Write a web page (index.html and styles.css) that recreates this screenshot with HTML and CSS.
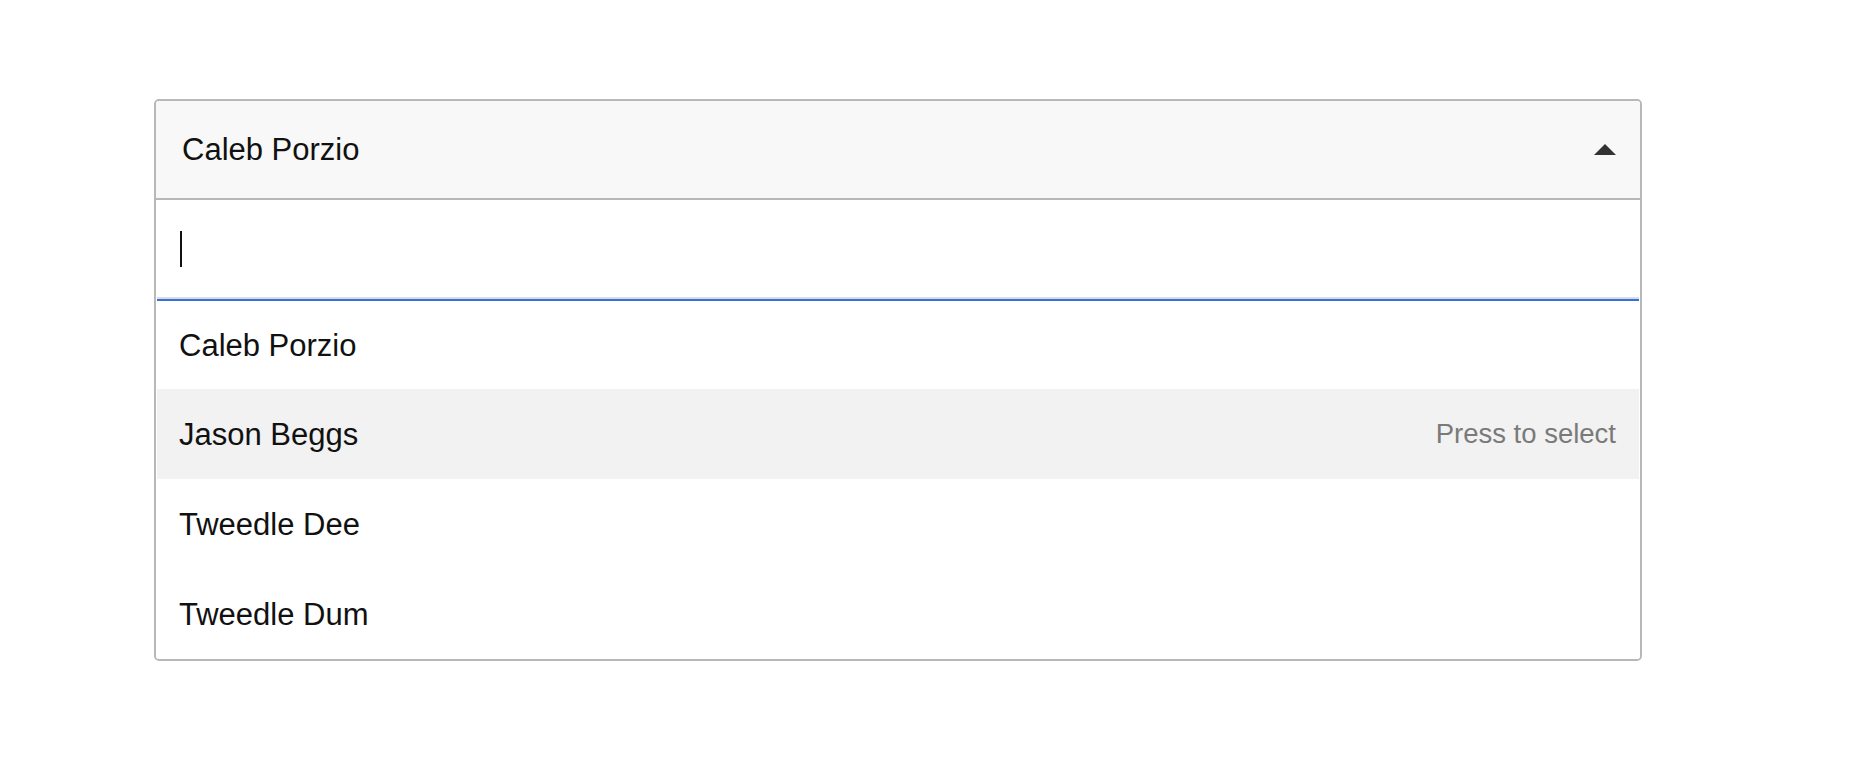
FILE: index.html
```html
<!DOCTYPE html>
<html lang="en">
<head>
<meta charset="utf-8">
<title>Combobox</title>
<link rel="stylesheet" href="styles.css">
</head>
<body>
<main class="page">
  <div class="combobox">
    <div class="combobox-button">
      <span class="combobox-value">Caleb Porzio</span>
      <svg class="combobox-arrow" width="22" height="11" viewBox="0 0 22 11" aria-hidden="true">
        <polygon points="11,0 22,11 0,11" fill="#333333"/>
      </svg>
    </div>
    <div class="combobox-panel">
      <div class="combobox-search"><span class="caret"></span></div>
      <ul class="combobox-options">
        <li class="option option-first">Caleb Porzio</li>
        <li class="option option-active"><span>Jason Beggs</span><span class="hint">Press to select</span></li>
        <li class="option">Tweedle Dee</li>
        <li class="option">Tweedle Dum</li>
      </ul>
    </div>
  </div>
</main>
</body>
</html>
```

FILE: styles.css
```css
html, body {
  margin: 0;
  padding: 0;
  background: #ffffff;
}

body {
  font-family: "Liberation Sans", Arial, Helvetica, sans-serif;
  color: #111111;
}

.page {
  padding: 99px 0 0 154px;
}

.combobox {
  width: 1484px;
  border: 2px solid #b8b8b8;
  border-radius: 5px;
  overflow: hidden;
}

.combobox-button {
  height: 97px;
  background: #f8f8f8;
  border-bottom: 2px solid #b8b8b8;
  display: flex;
  align-items: center;
  justify-content: space-between;
  padding: 0 24px 0 26px;
}

.combobox-value {
  font-size: 31px;
  line-height: 1;
}

.combobox-arrow {
  display: block;
  margin-top: -1px;
}

.combobox-panel {
  padding: 0 1px;
  background: #ffffff;
}

.combobox-search {
  height: 97px;
  border-bottom: 2px solid #dcdcdc;
  display: flex;
  align-items: center;
  padding-left: 23px;
}

.caret {
  display: block;
  width: 2px;
  height: 36px;
  background: #111111;
}

.combobox-options {
  list-style: none;
  margin: 0;
  padding: 0;
  border-top: 2px solid #3570e0;
}

.option {
  height: 90px;
  display: flex;
  align-items: center;
  justify-content: space-between;
  padding: 0 23px 0 22px;
  font-size: 31px;
  line-height: 1;
}

.option-first {
  height: 88px;
}

.option-active {
  background: #f2f2f2;
}

.hint {
  font-size: 27.5px;
  color: #7a7a7a;
}
```
